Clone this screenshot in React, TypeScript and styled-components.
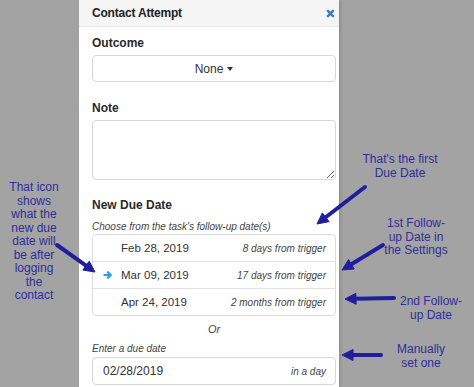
import React from 'react';
import styled, { createGlobalStyle } from 'styled-components';

const GlobalStyle = createGlobalStyle`
  html, body {
    margin: 0;
    padding: 0;
    background: #a3a3a3;
    font-family: "Liberation Sans", Arial, sans-serif;
  }
`;

const Page = styled.div`
  position: relative;
  display: grid;
  grid-template-columns: 79px 260px 1fr;
  width: 474px;
  height: 387px;
  overflow: hidden;
  background: #a3a3a3;
`;

const SideColumn = styled.div<{ $padTop?: number }>`
  position: relative;
  padding: ${p => p.$padTop || 0}px 11px 0 0;
  text-align: center;
`;

const NoteText = styled.div`
  color: #2e2e9c;
  font-size: 12px;
  line-height: 13.5px;
  white-space: pre;
`;

const Callout = styled(NoteText)<{ $top: number; $center: number }>`
  position: absolute;
  top: ${p => p.$top}px;
  left: ${p => p.$center - 60}px;
  width: 120px;
  text-align: center;
`;

const Panel = styled.div`
  background: #fff;
  box-shadow: 2px 0 2px rgba(0, 0, 0, 0.12);
  display: flex;
  flex-direction: column;
  color: #333;
`;

const Header = styled.div`
  height: 26px;
  display: flex;
  align-items: center;
  justify-content: space-between;
  padding: 0 4px 0 13px;
  background: #f5f5f5;
  border-bottom: 1px solid #e9e9e9;
`;

const Title = styled.div`
  font-size: 12px;
  font-weight: bold;
  color: #222;
  letter-spacing: -0.2px;
`;

const Body = styled.div`
  display: flex;
  flex-direction: column;
  padding: 0 3px 0 13px;
`;

const Label = styled.div<{ $mt: number }>`
  margin-top: ${p => p.$mt}px;
  font-size: 12px;
  line-height: 14px;
  font-weight: bold;
  color: #2a2a2a;
`;

const Hint = styled.div<{ $mt: number; $center?: boolean; $size?: number }>`
  margin-top: ${p => p.$mt}px;
  font-size: ${p => p.$size || 10}px;
  line-height: 12px;
  font-style: italic;
  color: #444;
  text-align: ${p => (p.$center ? 'center' : 'left')};
`;

const SelectButton = styled.div`
  margin-top: 5px;
  height: 25px;
  border: 1px solid #d6d6d6;
  border-radius: 4px;
  display: flex;
  align-items: center;
  justify-content: center;
  gap: 4px;
  font-size: 12px;
  color: #333;
`;

const Caret = styled.span`
  width: 0;
  height: 0;
  border-left: 3.5px solid transparent;
  border-right: 3.5px solid transparent;
  border-top: 4px solid #333;
  margin-top: 1px;
`;

const NoteArea = styled.textarea`
  margin-top: 5px;
  height: 60px;
  box-sizing: border-box;
  border: 1px solid #d6d6d6;
  border-radius: 4px;
  resize: vertical;
  outline: none;
  font-family: inherit;
`;

const DateList = styled.div`
  margin-top: 1px;
  border: 1px solid #dcdcdc;
  border-radius: 4px;
  display: flex;
  flex-direction: column;
`;

const DateRow = styled.div`
  height: 26px;
  display: grid;
  grid-template-columns: 18px 1fr auto;
  align-items: center;
  padding: 0 9px 0 10px;
  & + & {
    border-top: 1px solid #e2e2e2;
  }
`;

const DateText = styled.span`
  font-size: 11.5px;
  color: #333;
`;

const Relative = styled.span`
  font-size: 10px;
  font-style: italic;
  color: #444;
`;

const DueInput = styled.div`
  margin-top: 2px;
  height: 26px;
  border: 1px solid #d6d6d6;
  border-radius: 4px;
  display: flex;
  align-items: center;
  justify-content: space-between;
  padding: 0 9px 0 10px;
`;

const InputValue = styled.span`
  font-size: 12px;
  color: #333;
`;

const Overlay = styled.svg`
  position: absolute;
  left: 0;
  top: 0;
  pointer-events: none;
`;

const CloseIcon = () => (
  <svg width="9" height="9" viewBox="0 0 9 9">
    <path d="M1.2 1.2L7.8 7.8M7.8 1.2L1.2 7.8" stroke="#3b7cc4" strokeWidth="2.4" />
  </svg>
);

const ArrowIcon = () => (
  <svg width="9" height="10" viewBox="0 0 9 10">
    <path d="M0.5 5H7.5M4.3 1.6L7.7 5L4.3 8.4" stroke="#2f9fe4" strokeWidth="2.2" fill="none" />
  </svg>
);

type Pointer = [number, number, number, number];

const pointers: Pointer[] = [
  [365, 187, 317, 224],
  [383, 245, 342, 270],
  [394, 298, 345, 299],
  [381, 355, 342, 355],
  [57, 245, 95, 272],
];

const Pointers = () => (
  <Overlay width="474" height="387">
    {pointers.map(([x1, y1, x2, y2], i) => {
      const a = Math.atan2(y2 - y1, x2 - x1);
      const len = 11;
      const half = 5.5;
      const bx = x2 - Math.cos(a) * len;
      const by = y2 - Math.sin(a) * len;
      const px = -Math.sin(a) * half;
      const py = Math.cos(a) * half;
      return (
        <g key={i} fill="#1f1f9e" stroke="#1f1f9e">
          <line x1={x1} y1={y1} x2={bx} y2={by} strokeWidth="4" strokeLinecap="round" />
          <polygon
            points={`${x2},${y2} ${bx + px},${by + py} ${bx - px},${by - py}`}
            strokeWidth="1"
          />
        </g>
      );
    })}
  </Overlay>
);

const dates = [
  { date: 'Feb 28, 2019', rel: '8 days from trigger', current: false },
  { date: 'Mar 09, 2019', rel: '17 days from trigger', current: true },
  { date: 'Apr 24, 2019', rel: '2 months from trigger', current: false },
];

const App: React.FC = () => {
  return (
    <>
      <GlobalStyle />
      <Page>
        <SideColumn $padTop={181}>
          <NoteText>{'That icon\nshows\nwhat the\nnew due\ndate will\nbe after\nlogging\nthe\ncontact'}</NoteText>
        </SideColumn>
        <Panel>
          <Header>
            <Title>Contact Attempt</Title>
            <CloseIcon />
          </Header>
          <Body>
            <Label $mt={9}>Outcome</Label>
            <SelectButton>
              None <Caret />
            </SelectButton>
            <Label $mt={19}>Note</Label>
            <NoteArea />
            <Label $mt={18}>New Due Date</Label>
            <Hint $mt={9}>Choose from the task's follow-up date(s)</Hint>
            <DateList>
              {dates.map(d => (
                <DateRow key={d.date}>
                  <span>{d.current && <ArrowIcon />}</span>
                  <DateText>{d.date}</DateText>
                  <Relative>{d.rel}</Relative>
                </DateRow>
              ))}
            </DateList>
            <Hint $mt={7} $center $size={11}>Or</Hint>
            <Hint $mt={8}>Enter a due date</Hint>
            <DueInput>
              <InputValue>02/28/2019</InputValue>
              <Relative>in a day</Relative>
            </DueInput>
          </Body>
        </Panel>
        <SideColumn>
          <Callout $top={153} $center={61}>{"That's the first\nDue Date"}</Callout>
          <Callout $top={217} $center={77}>{'1st Follow-\nup Date in\nthe Settings'}</Callout>
          <Callout $top={295} $center={92}>{'2nd Follow-\nup Date'}</Callout>
          <Callout $top={343} $center={82}>{'Manually\nset one'}</Callout>
        </SideColumn>
        <Pointers />
      </Page>
    </>
  );
};

export default App;
